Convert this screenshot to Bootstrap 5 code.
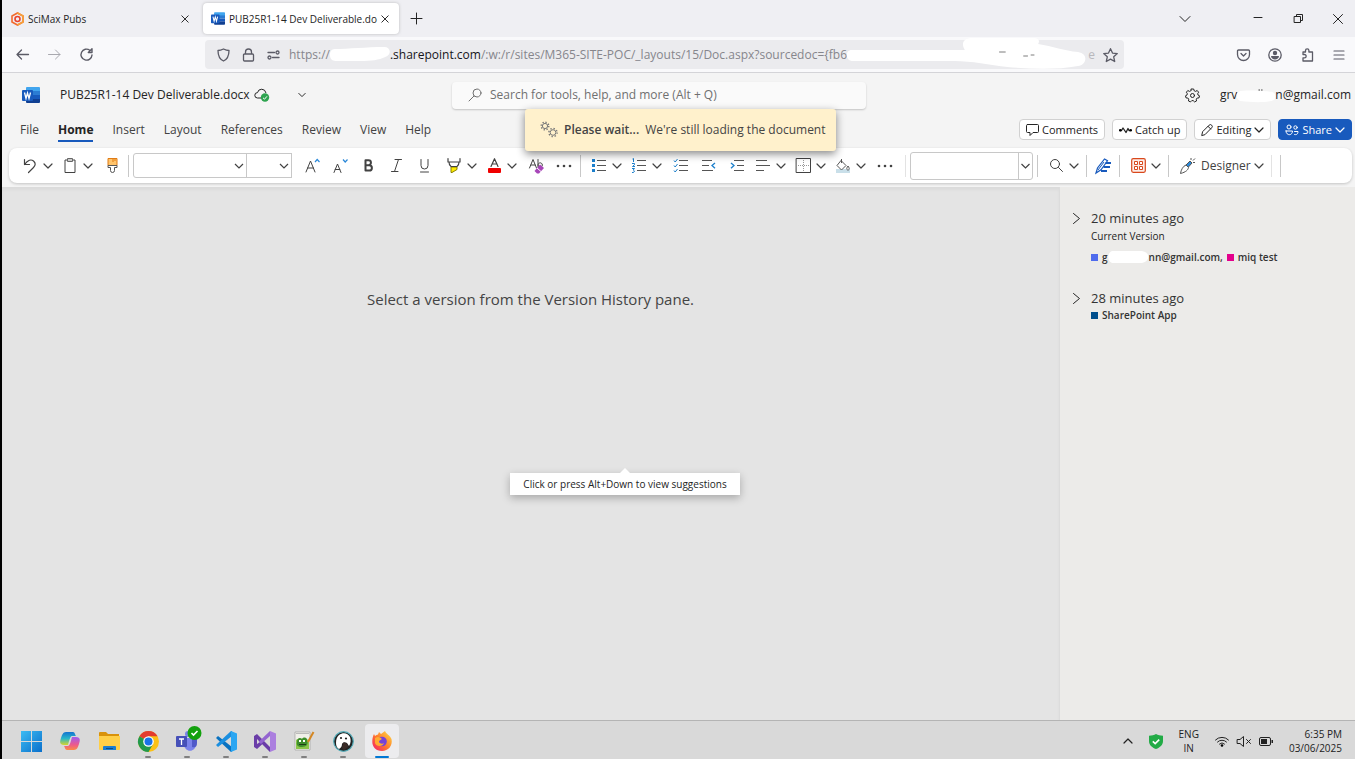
<!DOCTYPE html>
<html lang="en">
<head>
<meta charset="utf-8">
<meta name="viewport" content="width=device-width, initial-scale=1">
<title>PUB25R1-14 Dev Deliverable.docx</title>
<link href="https://cdn.jsdelivr.net/npm/bootstrap@5.3.0/dist/css/bootstrap.min.css" rel="stylesheet">
<style>
  body { font-family: "Open Sans", "Noto Sans", sans-serif; font-size: 12px; line-height: 16px; color: #242424; background: #e4e4e4; border-left: 2px solid #000; }
  svg { display: block; flex: none; overflow: visible; }
  button { font: inherit; color: inherit; }
  .bare { border: 0; background: none; padding: 0; display: flex; align-items: center; justify-content: center; flex: none; }
  .ln { fill: none; stroke: currentColor; stroke-linecap: round; stroke-linejoin: round; }
  /* browser chrome */
  .tabstrip { height: 37px; background: #efeff3; padding-left: 1px; }
  .browser-tab { font-size: 10px; height: 31px; width: 196px; border-radius: 4px; padding-left: 8px; padding-right: 10px; }
  .browser-tab.current { background: #fff; box-shadow: 0 0 3px #8888; }
  .win-btn { width: 34px; height: 32px; }
  .win-group { gap: 6px; margin-left: 39px; }
  .navrow { height: 36px; background: #f9f9fb; border-bottom: 1px solid #d4d4d8; color: #5b5b66; }
  .nav-btn { width: 32px; height: 28px; }
  .address { height: 29px; background: #ebebee; border-radius: 4px; margin-left: 103px; margin-right: 103px; color: #86868c; min-width: 0; }
  .address svg { margin-right: 9px; }
  .address .masked { margin: 0; }
  .address button svg { margin-right: 6px; }
  .address b { font-weight: 400; color: #15141a; }
  /* application header */
  .app-head { background: #f4f4f4; }
  .title-grid { display: grid; grid-template-columns: 450fr 414fr 489fr; height: 44px; align-items: center; }
  .search-box { height: 27px; background: #fafafa; border-radius: 4px; box-shadow: 0 1px 2px #0003; }
  .search-box input { border: 0; background: none; outline: 0; font-size: 12px; padding: 0; color: #666; }
  .search-box input::placeholder { color: #707070; }
  .wait-note { top: 100%; left: 73px; width: 311px; height: 42px; background: #fff1cc; border-radius: 3px; box-shadow: 0 3px 9px #0007; z-index: 5; color: #444; white-space: nowrap; padding-left: 15px; gap: 6px; }
  .wait-note strong { font-weight: 600; }
  .menu-tabs { gap: 19px; padding-left: 18px; }
  .menu-tab { font-size: 12px; color: #424242; text-decoration: none; padding: 5px 0 2px; border-bottom: 2px solid transparent; }
  .menu-tab.current { font-weight: 700; color: #242424; border-color: #185abd; }
  .acts { gap: 7px; padding-right: 3px; }
  .act { height: 21px; border: 1px solid #d1d1d1; border-radius: 4px; background: #fff; font-size: 11px; line-height: 16px; padding: 0 6px; display: flex; align-items: center; gap: 3px; white-space: nowrap; }
  .act.share { background: #185abd; border-color: #185abd; color: #fff; }
  .ribbon { height: 35px; background: #fff; border-radius: 8px; box-shadow: 0 1px 3px #0003; margin: 6px 3px 4px 7px; padding-left: 11px; gap: 4px; color: #424242; }
  .tool { width: 24px; height: 28px; }
  .split { height: 28px; }
  .split .face { width: 20px; display: flex; justify-content: center; }
  .split .drop { width: 16px; display: flex; justify-content: center; }
  .rule { width: 1px; height: 22px; background: #c8c8c8; flex: none; }
  .combo { height: 25px; border: 1px solid #c8c8c8; border-radius: 3px 0 0 3px; padding: 0 20px 0 6px; font-size: 12px; background-position: right 2px center; background-size: 10px 10px; background-image: url("data:image/svg+xml,%3Csvg xmlns='http://www.w3.org/2000/svg' viewBox='0 0 10 10'%3E%3Cpath d='M1 3l4 4 4-4' fill='none' stroke='%23424242' stroke-width='1.2'/%3E%3C/svg%3E"); }
  .combo.face-name { width: 114px; }
  .combo.face-size { width: 46px; margin-left: -1px; border-radius: 0; }
  .combo.style-name { width: 123px; height: 28px; border-radius: 3px; background-position: right center; background-size: 14px 28px; background-image: url("data:image/svg+xml,%3Csvg xmlns='http://www.w3.org/2000/svg' viewBox='0 0 14 28'%3E%3Cpath d='M.5 0v28' stroke='%23c8c8c8'/%3E%3Cpath d='M3.500 12l4 4 4-4' fill='none' stroke='%23424242' stroke-width='1.2'/%3E%3C/svg%3E"); }
  /* document area and history pane */
  .doc-area { padding-top: 101px; color: #444; font-size: 15px; line-height: 22px; box-shadow: inset 0 3px 3px #0000000a; }
  .hint { top: 286px; left: 508px; width: 230px; height: 22px; background: #fff; color: #242424; font-size: 10px; line-height: 22px; box-shadow: 0 3px 9px #0004; white-space: nowrap; }
  .hint::before { content: ""; position: absolute; left: 110px; top: -5px; border: 5px solid transparent; border-top: 0; border-bottom-color: #fff; }
  .history { width: 296px; background: #ecebe9; border-left: 1px solid #dcdcdc; padding: 22px 0 0 13px; font-size: 10px; }
  .history h2 { font-size: 13px; line-height: 18px; font-weight: 400; margin: 0; color: #333; }
  .history .who { font-weight: 600; color: #333; white-space: nowrap; }
  .history button { margin-right: 11px; }
  .swatch { width: 7px; height: 7px; flex: none; }
  /* taskbar */
  .taskbar { height: 39px; background: #d9d9d9; border-top: 1px solid #b4b4b4; padding: 2px 13px 0 12px; }
  .task { width: 34px; height: 34px; border-radius: 4px; margin-right: 5px; position: relative; }
  .task.open::after { content: ""; position: absolute; bottom: 0; width: 6px; height: 2px; border-radius: 1px; background: #808080; }
  .task.front { background: #ececee; }
  .task.front::after { width: 14px; background: #0078d4; }
  .tray { font-size: 10px; line-height: 14px; color: #222; }
</style>
</head>
<body class="d-flex flex-column min-vh-100">
<svg width="0" height="0" class="position-absolute" aria-hidden="true">
  <symbol id="chev" viewBox="0 0 10 10"><path class="ln" stroke-width="1.200" d="M1 3l4 4 4-4"/></symbol>
  <symbol id="cross" viewBox="0 0 10 10"><path class="ln" stroke-width="1.200" d="M1 1l8 8M9 1L1 9"/></symbol>
  <symbol id="word" viewBox="0 0 18 16"><path fill="#41a5ee" d="M5 0h12a1 1 0 0 1 1 1v4H4V1a1 1 0 0 1 1-1z"/><path fill="#2b7cd3" d="M4 4h14v4H4z"/><path fill="#185abd" d="M4 8h14v4H4z"/><path fill="#103f91" d="M4 12h14v3a1 1 0 0 1-1 1H5a1 1 0 0 1-1-1z"/><rect y="3" width="11" height="11" rx="1" fill="#185abd"/><path d="M2.500 5.500l1.500 6 1.500-5.500L7 11.500l1.500-6" fill="none" stroke="#fff" stroke-width="1.300"/></symbol>
</svg>

<header>
  <div class="tabstrip d-flex align-items-center">
    <div class="browser-tab d-flex align-items-center">
      <svg width="13" height="14" viewBox="0 0 13 14" fill="none"><path d="M6.500 1L12 4v6l-5.500 3L1 10V4z" stroke="#f26a2e" stroke-width="1.600"/><path d="M6.500 1L12 4v6l-5.500 3" stroke="#f7a13a" stroke-width="1.600"/><circle cx="6.500" cy="7" r="2.500" stroke="#e8442e" stroke-width="1.600"/></svg>
      <span class="ms-1 flex-fill">SciMax Pubs</span>
      <button class="bare" aria-label="Close tab"><svg width="8" height="8"><use href="#cross"/></svg></button>
    </div>
    <div class="browser-tab current d-flex align-items-center ms-1">
      <svg width="14" height="13"><use href="#word"/></svg>
      <span class="ms-1 flex-fill text-nowrap">PUB25R1-14 Dev Deliverable.do</span>
      <button class="bare" aria-label="Close tab"><svg width="8" height="8"><use href="#cross"/></svg></button>
    </div>
    <button class="bare win-btn" aria-label="New tab"><svg width="11" height="11" viewBox="0 0 11 11"><path class="ln" d="M5.500 0v11M0 5.500h11"/></svg></button>
    <button class="bare win-btn ms-auto" aria-label="List tabs"><svg width="12" height="12" viewBox="0 0 12 12"><path class="ln" d="M1 3.500l5 5 5-5"/></svg></button>
    <div class="d-flex win-group">
      <button class="bare win-btn" aria-label="Minimize"><svg width="10" height="10"><path class="ln" d="M1 3.500h8"/></svg></button>
      <button class="bare win-btn" aria-label="Restore"><svg width="9" height="9" viewBox="0 0 9 9"><path class="ln" d="M.5 2.500h6v6h-6zM2.500 2.500v-2h6v6h-2"/></svg></button>
      <button class="bare win-btn" aria-label="Close"><svg width="10" height="10" viewBox="0 0 10 10"><path class="ln" d="M.5.5l9 9M9.500.5l-9 9"/></svg></button>
    </div>
  </div>
  <div class="navrow d-flex align-items-center">
    <div class="d-flex ps-1">
      <button class="bare nav-btn" aria-label="Back"><svg width="13" height="11" viewBox="0 0 13 11"><path class="ln" stroke-width="1.300" d="M12.500 5.500H1M5.500 1L1 5.500 5.500 10"/></svg></button>
      <button class="bare nav-btn opacity-50" aria-label="Forward"><svg width="13" height="11" viewBox="0 0 13 11"><path class="ln" d="M.5 5.500H12M7.500 1L12 5.500 7.500 10"/></svg></button>
      <button class="bare nav-btn" aria-label="Reload"><svg width="13" height="13" viewBox="0 0 13 13"><path class="ln" stroke-width="1.400" d="M12 7A5.500 5.500 0 1 1 9.800 2.200M12 .8v3.700H8.300z"/></svg></button>
    </div>
    <div class="address flex-fill d-flex align-items-center text-nowrap ps-2">
      <svg class="ms-1" width="13" height="14" viewBox="0 0 13 14" color="#5b5b66"><path class="ln" stroke-width="1.300" d="M6.500 1C4.500 2 3 2.500 1 2.500c0 5 1 8.500 5.500 10.500C11 11 12 7.500 12 2.500c-2 0-3.500-.5-5.500-1.500z"/></svg>
      <svg class="ms-1" width="11" height="14" viewBox="0 0 11 14" color="#5b5b66"><path class="ln" stroke-width="1.300" d="M2.500 6V4a3 3 0 0 1 6 0v2M1.500 6h8a1 1 0 0 1 1 1v5a1 1 0 0 1-1 1h-8a1 1 0 0 1-1-1V7a1 1 0 0 1 1-1z"/></svg>
      <svg class="ms-1" width="13" height="10" viewBox="0 0 13 10" color="#5b5b66"><path class="ln" stroke-width="1.300" d="M1 2.500h6.500M5.500 7.500H12"/><circle class="ln" stroke-width="1.300" cx="10.500" cy="2.500" r="1.500"/><circle class="ln" stroke-width="1.300" cx="2.500" cy="7.500" r="1.500"/></svg>
      <span>https://</span>
      <svg class="masked" width="60" height="15" viewBox="0 0 63 15" preserveAspectRatio="none"><path fill="#fff" d="M5 2C20 2 38 0 57 0c7 0 8 8 1 10-7 3-14 4-27 4H6C-2 14-2 2 5 2z"/></svg>
      <span><b>.sharepoint.com</b>/:w:/r/sites/M365-SITE-POC/_layouts/15/Doc.aspx?sourcedoc={fb6</span>
      <svg class="masked flex-fill" width="1" height="30" viewBox="0 0 260 30" preserveAspectRatio="none"><path fill="#fff" d="M5 10h122c-5-8 0-12 8-12h65c7 0 8 3 6 6 16 2 28 7 43 8 12 2 9 13 0 14-24 4-50 3-76 1-19-2-39-6-57-6H5c-7-1-7-11 0-11z"/><path d="M164 12h7M190 16h5m3-1h4" stroke="#777"/></svg>
      <span class="opacity-50 me-2">e</span>
      <button class="bare" aria-label="Bookmark"><svg width="15" height="14" viewBox="0 0 15 14" color="#5b5b66"><path class="ln" stroke-width="1.300" d="M7.500.7l2 4.400 4.800.5-3.600 3.200 1 4.700-4.200-2.400-4.200 2.400 1-4.700L.7 5.600l4.800-.5z"/></svg></button>
    </div>
    <button class="bare nav-btn" aria-label="Pocket"><svg width="13" height="12" viewBox="0 0 13 12"><path class="ln" stroke-width="1.300" d="M1.500 1h10a1 1 0 0 1 1 1v3.500a6 6 0 0 1-12 0V2a1 1 0 0 1 1-1zM4 4.500L6.500 7 9 4.500"/></svg></button>
    <button class="bare nav-btn" aria-label="Account"><svg width="14" height="14" viewBox="0 0 14 14"><circle class="ln" stroke-width="1.300" cx="7" cy="7" r="6.200"/><circle cx="7" cy="5" r="2.200" fill="currentColor"/><path fill="currentColor" d="M3 8h8c0 2-2 3.500-4 3.500S3 10 3 8z"/></svg></button>
    <button class="bare nav-btn" aria-label="Extensions"><svg width="13" height="14" viewBox="0 0 13 14"><path class="ln" stroke-width="1.300" d="M4.500 4V2.500a1.700 1.700 0 0 1 3.400 0V4h3.600v9H2V9.800h1.500a1.600 1.600 0 0 0 0-3.300H2V4z"/></svg></button>
    <button class="bare nav-btn" aria-label="Menu"><svg width="12" height="10" viewBox="0 0 12 10"><path class="ln" stroke-width="1.200" d="M1 1h10M1 5h10M1 9h10"/></svg></button>
  </div>
</header>

<div class="app-head">
  <div class="title-grid">
    <div class="d-flex align-items-center ps-3">
      <svg class="ms-1" width="18" height="16"><use href="#word"/></svg>
      <span class="ms-3 ps-1">PUB25R1-14 Dev Deliverable.docx</span>
      <svg class="ms-1" width="16" height="14" viewBox="0 0 16 14"><path class="ln" d="M7 10H3.500a2.700 2.700 0 0 1 0-5.400 4.300 4.300 0 0 1 8.400 0"/><circle cx="11" cy="9.500" r="4.200" fill="#2ea44f"/><path d="M9 9.800l1.500 1.400L13 8.300" fill="none" stroke="#fff"/></svg>
      <button class="bare ms-4 ps-1" aria-label="File details"><svg width="8" height="8"><use href="#chev"/></svg></button>
    </div>
    <div class="position-relative">
      <label class="search-box d-flex align-items-center ps-3">
        <svg width="14" height="14" viewBox="0 0 14 14" color="#707070"><circle class="ln" cx="9" cy="5" r="4"/><path class="ln" d="M6 8L1 13"/></svg>
        <input class="ms-2 flex-fill" type="search" aria-label="Search" placeholder="Search for tools, help, and more (Alt + Q)">
      </label>
      <div class="wait-note position-absolute d-flex align-items-center" role="status">
        <svg width="18" height="18" viewBox="0 0 18 18" fill="none" stroke="#777"><circle cx="5" cy="5" r="2.600"/><circle cx="5" cy="5" r="3.800" stroke-width="1.400" stroke-dasharray="1.300 1.680"/><circle cx="13" cy="11.500" r="2.800"/><circle cx="13" cy="11.500" r="4.100" stroke-width="1.400" stroke-dasharray="1.400 1.820"/></svg>
        <strong>Please wait...</strong><span>We're still loading the document</span>
      </div>
    </div>
    <div class="d-flex align-items-center justify-content-end pe-1">
      <button class="bare me-3" aria-label="Settings"><svg class="me-1" width="15" height="15" viewBox="0 0 15 15"><path class="ln" d="M6.300 1h2.400l.4 1.700 1.500.7 1.600-.9 1.400 1.700-.9 1.500.3 1.300 1.500.8-.5 2.100-1.800.1-.9 1.200.2 1.800-2 .9-1.300-1.300H6.800l-1.300 1.300-2-.9.2-1.800-.9-1.200L1 9.900.5 7.800 2 7l.3-1.300-.9-1.500 1.400-1.700 1.600.9 1.500-.7z"/><circle class="ln" cx="7.500" cy="7.500" r="2"/></svg></button>
      <span>grv</span>
      <svg width="38" height="13" viewBox="0 0 42 13" preserveAspectRatio="none"><path fill="#fff" d="M4 2c12-1 25 0 35 1 5 2 5 8-1 9-11 2-24 1-34 0-6-2-6-9 0-10z"/><path stroke="#666" d="M24.500 0v2M27.500 0v2"/></svg>
      <span>n@gmail.com</span>
    </div>
  </div>
  <div class="d-flex align-items-center">
    <nav class="menu-tabs d-flex flex-fill" aria-label="Ribbon tabs">
      <a class="menu-tab" href="#">File</a><a class="menu-tab current" href="#">Home</a><a class="menu-tab" href="#">Insert</a><a class="menu-tab" href="#">Layout</a><a class="menu-tab" href="#">References</a><a class="menu-tab" href="#">Review</a><a class="menu-tab" href="#">View</a><a class="menu-tab" href="#">Help</a>
    </nav>
    <div class="acts d-flex">
      <button class="act"><svg width="13" height="12" viewBox="0 0 13 12"><path class="ln" d="M1.500.5h10a1 1 0 0 1 1 1v6a1 1 0 0 1-1 1H7l-3 3v-3H1.500a1 1 0 0 1-1-1v-6a1 1 0 0 1 1-1z"/></svg>Comments</button>
      <button class="act"><svg width="13" height="8" viewBox="0 0 13 8"><path class="ln" stroke-width="1.300" d="M1 4.500h1.500L4 2l3 4.500 2-4 1 2h1"/><circle cx="1.300" cy="4.300" r="1.300"/><circle cx="11.700" cy="4.300" r="1.300"/></svg>Catch up</button>
      <button class="act"><svg width="12" height="12" viewBox="0 0 12 12"><path class="ln" d="M.8 11.200l.8-3.500 6.500-6.500a1.600 1.600 0 0 1 2.600 2.600L4.200 10.400zM7 2.300L9.700 5"/></svg>Editing<svg width="10" height="10"><use href="#chev"/></svg></button>
      <button class="act share"><svg width="14" height="12" viewBox="0 0 14 12"><circle class="ln" cx="4" cy="3" r="2"/><circle class="ln" cx="10.500" cy="3.500" r="1.700"/><path class="ln" d="M1 7h6.500c0 5-6.500 5-6.500 0zM9.500 7.500h3.500c0 3-2 3.500-3.500 3"/></svg>Share<svg width="10" height="10"><use href="#chev"/></svg></button>
    </div>
  </div>
  <div class="overflow-hidden">
  <div class="ribbon d-flex align-items-center" role="toolbar" aria-label="Home">
    <button class="bare split" aria-label="Undo"><span class="face"><svg width="14" height="14" viewBox="0 0 14 14"><path class="ln" stroke-width="1.200" d="M1.500.5v5h5M1.500 5.500C5 1 8 0 10.500 2c2.500 2.200 2 4.500 0 6.500L5.500 13.500"/></svg></span><span class="drop"><svg width="10" height="10"><use href="#chev"/></svg></span></button>
    <button class="bare split" aria-label="Paste"><span class="face"><svg width="12" height="15" viewBox="0 0 12 15"><path class="ln" d="M3.500 2H1v12.500h10V2H8.500"/><path d="M3.500.5h5v3h-5z" fill="#ccc" stroke="#666"/></svg></span><span class="drop"><svg width="10" height="10"><use href="#chev"/></svg></span></button>
    <button class="bare tool" aria-label="Format painter"><svg width="11" height="15" viewBox="0 0 11 15"><path d="M1 .5h9v7H1z" fill="#ffc46b" stroke="#e07b14"/><path d="M6 1v3M8 1v2" stroke="#e07b14"/><path d="M1 7.500h9v2H7.500v3a2 2 0 0 1-4 0v-3H1z" fill="#fff" stroke="#555"/></svg></button>
    <span class="rule"></span>
    <div class="d-flex">
      <select class="form-select combo face-name" aria-label="Font"><option></option></select>
      <select class="form-select combo face-size" aria-label="Font size"><option></option></select>
    </div>
    <button class="bare tool ms-1" aria-label="Grow font"><svg width="15" height="15" viewBox="0 0 15 15"><path class="ln" d="M1 14L5.500 3 10 14M2.500 10h6"/><path d="M10 4l2.200-2.500L14.500 4" fill="none" stroke="#2b88d8" stroke-width="1.200"/></svg></button>
    <button class="bare tool" aria-label="Shrink font"><svg width="15" height="15" viewBox="0 0 15 15"><path class="ln" d="M1 14.500L4.500 6 8 14.500M2.200 11.500h4.600"/><path d="M10 1.500L12.200 4l2.300-2.500" fill="none" stroke="#2b88d8" stroke-width="1.200"/></svg></button>
    <button class="bare tool" aria-label="Bold"><svg width="9" height="13" viewBox="0 0 9 13"><path class="ln" stroke-width="2" d="M1.500 1.300h3a2.400 2.400 0 0 1 0 4.900h-3zM1.500 6.200h3.700a2.700 2.700 0 0 1 0 5.400H1.500z"/></svg></button>
    <button class="bare tool" aria-label="Italic"><svg width="11" height="13" viewBox="0 0 11 13"><path class="ln" d="M4 .5h6.500M.5 12.500H7M7.500.5l-4 12"/></svg></button>
    <button class="bare tool" aria-label="Underline"><svg width="9" height="14" viewBox="0 0 9 14"><path class="ln" d="M1 .5v6a3.500 3.500 0 0 0 7 0v-6M.5 13h8"/></svg></button>
    <button class="bare split ms-1" aria-label="Highlight"><span class="face"><svg width="14" height="15" viewBox="0 0 14 15"><path fill="#ffeb00" stroke="#8a8100" d="M4 9h6v2.500L5 14.500H4z"/><path class="ln" stroke-width="1.200" d="M1 .5V4h12V.5M2 4c0 2 .5 3.500 2 4.500h6c1.500-1 2-2.500 2-4.500"/></svg></span><span class="drop"><svg width="10" height="10"><use href="#chev"/></svg></span></button>
    <button class="bare split" aria-label="Font color"><span class="face"><svg width="13" height="15" viewBox="0 0 13 15"><path class="ln" stroke-width="1.200" d="M3 8.500L6.500.7 10 8.500M4 6h5"/><rect y="10" width="13" height="5" rx="1" fill="#f00000"/></svg></span><span class="drop"><svg width="10" height="10"><use href="#chev"/></svg></span></button>
    <button class="bare tool" aria-label="Clear formatting"><svg width="15" height="16" viewBox="0 0 15 16"><path class="ln" d="M.5 10L4 1.500 7.500 10M2 7h4M9 1.500V9M9 6.500a2.200 2.200 0 1 1 0 1"/><path fill="#a745b8" d="M11 6.500l4 3.500-5 5.500H8L5.500 13z"/><path d="M8 10l4 3.500" stroke="#fff"/></svg></button>
    <button class="bare tool" aria-label="More font options"><svg width="16" height="4" fill="currentColor"><circle cx="2" cy="2" r="1.300"/><circle cx="8" cy="2" r="1.300"/><circle cx="14" cy="2" r="1.300"/></svg></button>
    <span class="rule"></span>
    <button class="bare split ms-1" aria-label="Bullets"><span class="face"><svg width="14" height="13" viewBox="0 0 14 13"><path d="M5 1.500h9M5 6.500h9M5 11.500h9" stroke="#555"/><path fill="#1b7fcc" d="M0 0h3v3H0zM0 5h3v3H0zM0 10h3v3H0z"/></svg></span><span class="drop"><svg width="10" height="10"><use href="#chev"/></svg></span></button>
    <button class="bare split" aria-label="Numbering"><span class="face"><svg width="14" height="15" viewBox="0 0 14 15"><path d="M5 2.500h9M5 7.500h9M5 12.500h9" stroke="#555"/><path d="M.5 1l1-.5v3.500M0 5.500h2.500v1.200L.5 8.500h2.500M0 10.500h2.500L1.200 12l1.300 1-1 1.500H0" fill="none" stroke="#1b7fcc"/></svg></span><span class="drop"><svg width="10" height="10"><use href="#chev"/></svg></span></button>
    <button class="bare tool" aria-label="Checklist"><svg width="14" height="13" viewBox="0 0 14 13"><path d="M5 1.500h9M5 6.500h9M5 11.500h9" stroke="#555"/><path d="M0 1.500L1.200 3 3.500 0M0 6.500L1.200 8l2.300-3M0 11.500L1.200 13l2.300-3" fill="none" stroke="#1b7fcc"/></svg></button>
    <button class="bare tool" aria-label="Decrease indent"><svg width="14" height="12" viewBox="0 0 14 12"><path d="M0 .5h10M0 5.500h7M0 10.500h11" stroke="#555"/><path d="M13 3L10 5.500l3 2.800" fill="none" stroke="#1b7fcc" stroke-width="1.300"/></svg></button>
    <button class="bare tool" aria-label="Increase indent"><svg width="14" height="12" viewBox="0 0 14 12"><path d="M4 .5h10M7 5.500h7M4 10.500h10" stroke="#555"/><path d="M1 3l3 2.500-3 2.800" fill="none" stroke="#1b7fcc" stroke-width="1.300"/></svg></button>
    <button class="bare split" aria-label="Align"><span class="face"><svg width="14" height="12" viewBox="0 0 14 12"><path d="M0 .5h11M0 5.500h14M0 10.500h8" stroke="#555"/></svg></span><span class="drop"><svg width="10" height="10"><use href="#chev"/></svg></span></button>
    <button class="bare split" aria-label="Borders"><span class="face"><svg width="15" height="15" viewBox="0 0 15 15"><path class="ln" d="M.5.5h14v14H.5z"/><path d="M7.500 2v12M2 7.500h12" stroke="#999" stroke-dasharray="1 1"/></svg></span><span class="drop"><svg width="10" height="10"><use href="#chev"/></svg></span></button>
    <button class="bare split" aria-label="Shading"><span class="face"><svg width="14" height="14" viewBox="0 0 14 14"><path fill="#c9dfe9" d="M0 10h14v4H0z"/><path fill="#fff" stroke="#555" d="M5 1.500L10 6.500 5.500 11 1 6.500zM5.500 0v4M12 7c2.200 3 1 4 0 4s-2.200-1 0-4z"/></svg></span><span class="drop"><svg width="10" height="10"><use href="#chev"/></svg></span></button>
    <button class="bare tool" aria-label="More paragraph options"><svg width="16" height="4" fill="currentColor"><circle cx="2" cy="2" r="1.300"/><circle cx="8" cy="2" r="1.300"/><circle cx="14" cy="2" r="1.300"/></svg></button>
    <span class="rule ms-1 opacity-50"></span>
    <select class="form-select combo style-name" aria-label="Style"><option></option></select>
    <span class="rule"></span>
    <button class="bare split ms-1" aria-label="Find"><span class="face"><svg width="13" height="13" viewBox="0 0 13 13"><circle class="ln" cx="5" cy="5" r="4.500"/><path class="ln" d="M8.500 8.500l4 4"/></svg></span><span class="drop"><svg width="10" height="10"><use href="#chev"/></svg></span></button>
    <span class="rule"></span>
    <button class="bare tool" aria-label="Editor"><svg width="16" height="16" viewBox="0 0 16 16"><path fill="#fff" stroke="#185abd" stroke-width="1.200" d="M1 15l1.500-5L9.500 1l3 1.800-6.500 9z"/><path d="M10.500 5H16M8.500 9H15M6 13h6" stroke="#185abd" stroke-width="2"/><path d="M3 12l6-8" stroke="#185abd"/></svg></button>
    <span class="rule"></span>
    <button class="bare split ms-1" aria-label="Add-ins"><span class="face"><svg width="15" height="15" viewBox="0 0 15 15" fill="none" stroke="#d9481c"><rect x=".7" y=".7" width="13.600" height="13.600" rx="1.500" fill="#fdeee8" stroke-width="1.200"/><path fill="#fff" d="M3.500 3.500h3v3h-3zM8.500 3.500h3v3h-3zM3.500 8.500h3v3h-3zM8.500 8.500h3v3h-3z"/></svg></span><span class="drop"><svg width="10" height="10"><use href="#chev"/></svg></span></button>
    <span class="rule"></span>
    <button class="bare split ms-1" aria-label="Designer"><span class="face"><svg width="15" height="16" viewBox="0 0 15 16"><path fill="#2b88d8" stroke="#555" d="M6 7l4-4 2 2-4 4.500z"/><path fill="#fff" stroke="#555" d="M6 7l2.500 2.500C8 12 6 14 .5 15.500 1 12 3 8 6 7z"/><path d="M11 0v2M13 2.500l2-2M13 4.500h2" stroke="#555"/></svg></span><span class="ms-1">Designer</span><span class="drop"><svg width="10" height="10"><use href="#chev"/></svg></span></button>
    <span class="rule opacity-50"></span>
    <span class="rule ms-1"></span>
  </div>
  </div>
</div>

<div class="d-flex flex-fill">
  <main class="doc-area flex-fill position-relative text-center">
    <p class="m-0">Select a version from the Version History pane.</p>
    <div class="hint position-absolute" role="tooltip">Click or press Alt+Down to view suggestions</div>
  </main>
  <aside class="history flex-shrink-0" aria-label="Version History">
    <section class="d-flex mb-4">
      <button class="bare align-self-start mt-1" aria-label="Expand version"><svg width="7" height="11" viewBox="0 0 7 11"><path class="ln" d="M.5.5l6 5-6 5"/></svg></button>
      <div>
        <h2>20 minutes ago</h2>
        <div class="mt-1 mb-1 lh-1 pb-1">Current Version</div>
        <div class="who d-flex align-items-center"><span class="swatch me-1" style="background:#4f6bed"></span>g<svg width="41" height="12" viewBox="0 0 41 12"><path fill="#fff" d="M4 0h30c8 1 9 10 0 12H4C-1 10-1 2 4 0z"/></svg>nn@gmail.com,<span class="swatch mx-1" style="background:#e3008c"></span>miq test</div>
      </div>
    </section>
    <section class="d-flex">
      <button class="bare align-self-start mt-1" aria-label="Expand version"><svg width="7" height="11" viewBox="0 0 7 11"><path class="ln" d="M.5.5l6 5-6 5"/></svg></button>
      <div>
        <h2>28 minutes ago</h2>
        <div class="who d-flex align-items-center"><span class="swatch me-1" style="background:#004e8c"></span>SharePoint App</div>
      </div>
    </section>
  </aside>
</div>

<footer class="taskbar d-flex align-items-center">
  <button class="bare task" aria-label="Start"><svg width="21" height="21" viewBox="0 0 21 21"><defs><linearGradient id="wg" x2="1" y2="1"><stop stop-color="#3cbcf3"/><stop offset="1" stop-color="#0a6fcb"/></linearGradient></defs><path fill="url(#wg)" d="M0 0h10v10H0zM11 0h10v10H11zM0 11h10v10H0zM11 11h10v10H11z"/></svg></button>
  <button class="bare task" aria-label="Copilot"><svg width="20" height="18" viewBox="0 0 20 18"><defs><linearGradient id="ca" y2="1" x2="0"><stop stop-color="#1473d1"/><stop offset=".5" stop-color="#29b6c8"/><stop offset="1" stop-color="#d7d52b"/></linearGradient><linearGradient id="cb" y2="1" x2="0"><stop stop-color="#a05cf0"/><stop offset=".6" stop-color="#ed5a8b"/><stop offset="1" stop-color="#fb8b45"/></linearGradient></defs><path fill="url(#ca)" d="M6 0h7c2 0 2 3 3 4h-4c-2 0-3 6-4 9H4c-5 0-4-4-3-7s2-6 5-6z"/><path fill="url(#cb)" d="M14 18H7c-2 0-2-3-3-4h4c2 0 3-6 4-9h4c5 0 4 4 3 7s-2 6-5 6z"/></svg></button>
  <button class="bare task" aria-label="File Explorer"><svg width="21" height="18" viewBox="0 0 21 18"><path fill="#d9920b" d="M0 1a1 1 0 0 1 1-1h6l2 2h11v8H0z"/><path fill="#ffcf48" d="M0 4h21v13a1 1 0 0 1-1 1H1a1 1 0 0 1-1-1z"/><path fill="#1b7ed0" d="M4 18v-3a1 1 0 0 1 1-1h11a1 1 0 0 1 1 1v3z"/><path stroke="#0a4c8c" d="M7 16.500h7"/></svg></button>
  <button class="bare task open" aria-label="Chrome"><svg width="21" height="21" viewBox="0 0 21 21"><circle cx="10.500" cy="10.500" r="10.500" fill="#fbc116"/><path fill="#e33b2e" d="M10.500 10.500L1.400 5.250A10.500 10.500 0 0 1 19.600 5.250L10.500 5.250z"/><path fill="#229a4c" d="M1.400 5.250A10.500 10.500 0 0 0 10.500 21l4.600-7.900-4.600-2.600z"/><circle cx="10.500" cy="10.500" r="5.300" fill="#fff"/><circle cx="10.500" cy="10.500" r="4" fill="#1a73e8"/></svg></button>
  <button class="bare task open" aria-label="Teams"><svg width="22" height="20" viewBox="0 0 22 20"><circle cx="12" cy="3" r="3" fill="#7b83eb"/><path fill="#7b83eb" d="M8 7h12v6c0 9-12 9-12 0z"/><path fill="#5059c9" d="M16 7h5v5c0 4-2 5-5 4z"/><rect y="5" width="11" height="11" rx="1" fill="#4650b8"/><path d="M3 8h5M5.500 8v6" stroke="#fff" stroke-width="1.300"/><circle cx="18.500" cy="2" r="7" fill="#13a10e"/><path d="M15.500 2l2 2 4-4" stroke="#fff" stroke-width="1.600" fill="none"/></svg></button>
  <button class="bare task open" aria-label="Visual Studio Code"><svg width="21" height="21" viewBox="0 0 21 21"><path fill="#0a72c0" d="M0 7l2-2 14 11v4.500L15 21z"/><path fill="#1b8fe0" d="M0 14l2 2L16 5V0h-1z"/><path fill="#2ba6f2" d="M15 0l6 2.500v16L15 21z"/></svg></button>
  <button class="bare task open" aria-label="Visual Studio"><svg width="22" height="21" viewBox="0 0 22 21"><path fill="#6a3da8" d="M0 5l3-2 13 13v5L3 8v5l4-2.500 2 2L3 18l-3-2z"/><path fill="#9464d0" d="M16 0v5L7 13 4.500 11z"/><path fill="#ab7fdf" d="M16 0l6 2.500v16L16 21z"/></svg></button>
  <button class="bare task open" aria-label="Notepad++"><svg width="21" height="20" viewBox="0 0 21 20"><path fill="#f1f1ea" stroke="#999" stroke-width=".6" d="M1 1h15v18H1z"/><path fill="#8cc64b" d="M2 9c3-2 9-1 13 0v9H2z"/><path fill="#3e8f2c" d="M3 11c0-4 3-5 5-3 2-3 6-1 5 2 2 3-1 6-5 6s-6-2-5-5z"/><path fill="#fff" d="M5 9h2v2H5zM9 9h2v2H9z"/><path stroke="#1f3d17" d="M5 13.500h7"/><path stroke="#d48724" stroke-width="2" d="M19.500 1L14 11"/><path d="M2 2.500h13" stroke="#bbb"/></svg></button>
  <button class="bare task open" aria-label="DBeaver"><svg width="21" height="21" viewBox="0 0 21 21"><circle cx="10.500" cy="10.500" r="9.800" fill="#222" stroke="#55aebb" stroke-width="1.200"/><path fill="#fff" d="M6 4c4-3 9-2 11 2 1 3 1 6-1 9l-2-3c-2-1-4-1-5 1 0 2-1 4-3 5-2-1-3-3-3-6 0-4 1-6 3-8z"/><circle cx="8" cy="7" r="1.100" fill="#222"/><circle cx="13" cy="7.500" r="1.100" fill="#222"/><path fill="#3a2b27" d="M10 12c3-1 5 1 5 4l-4 3-2-2z"/></svg></button>
  <button class="bare task open front" aria-label="Firefox"><svg width="20" height="20" viewBox="0 0 20 20"><defs><linearGradient id="fx" x1="1" x2="0" y2="1"><stop stop-color="#ffe14a"/><stop offset=".5" stop-color="#ff7f2a"/><stop offset="1" stop-color="#f5156c"/></linearGradient></defs><path fill="url(#fx)" d="M2 3l1 2c1-1 2-1.500 3-1.500L7 1l2 2 4-3c1 3 5 4 6.500 8C21 15 16 20 10 20S0 16 .3 10C.4 7 1 5 2 3z"/><circle cx="10" cy="10.500" r="4.800" fill="#7542d8"/><path fill="#ffab32" d="M3 7c3-2 5-1 7 1-1 1-3 1-3 3 1 2 4 2 5 1-1 4-8 4-9 0z"/></svg></button>
  <div class="tray d-flex align-items-center ms-auto">
    <button class="bare" aria-label="Hidden icons"><svg width="10" height="6" viewBox="0 0 10 6"><path class="ln" stroke-width="1.200" d="M1 5l4-4 4 4"/></svg></button>
    <svg class="ms-3" width="14" height="15" viewBox="0 0 14 15"><path fill="#22ab46" d="M7 0c2 1.200 4 1.700 7 1.700V7c0 4-3 6.500-7 8-4-1.500-7-4-7-8V1.700C3 1.700 5 1.200 7 0z"/><path d="M3.800 7.300L6.200 9.600l4-4" fill="none" stroke="#fff" stroke-width="1.600"/></svg>
    <span class="text-center ms-3">ENG<br>IN</span>
    <svg class="ms-3" width="14" height="11" viewBox="0 0 14 11"><path class="ln" d="M.5 4a9 9 0 0 1 13 0M2.500 6a6.300 6.300 0 0 1 9 0M4.500 8a3.600 3.600 0 0 1 5 0"/><circle cx="7" cy="9.500" r="1.300"/></svg>
    <svg class="ms-2" width="14" height="11" viewBox="0 0 14 11"><path class="ln" d="M.5 3.500H3l3.500-3v10L3 7.500H.5zM9.500 3.500l4 4M13.500 3.500l-4 4"/></svg>
    <svg class="ms-2" width="14" height="9" viewBox="0 0 14 9"><rect x=".5" y=".5" width="11" height="8" rx="1.500" fill="none" stroke="#222"/><path fill="#222" d="M2 2h6v5H2zM12.500 3H14v3h-1.500z"/></svg>
    <span class="text-end ms-3">6:35 PM<br>03/06/2025</span>
  </div>
</footer>
<script src="https://cdn.jsdelivr.net/npm/bootstrap@5.3.0/dist/js/bootstrap.bundle.min.js"></script>
</body>
</html>
